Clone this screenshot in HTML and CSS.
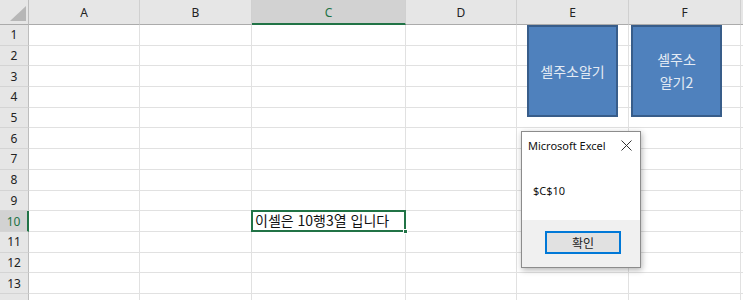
FILE: index.html
```html
<!DOCTYPE html>
<html lang="ko">
<head>
    <meta charset="UTF-8">
    <title>셀주소알기</title>
    <link rel="stylesheet" href="styles.css">
</head>
<body>
<div class="wrap">
    <div class="sheet">
        <div class="corner"><span class="tri"></span></div>
        <div class="colhead">A</div>
        <div class="colhead">B</div>
        <div class="colhead on">C</div>
        <div class="colhead">D</div>
        <div class="colhead">E</div>
        <div class="colhead">F</div>
        <div class="colhead"></div>

        <div class="rowhead">1</div><div class="cell"></div><div class="cell"></div><div class="cell"></div><div class="cell"></div><div class="cell"></div><div class="cell"></div><div class="cell"></div>
        <div class="rowhead">2</div><div class="cell"></div><div class="cell"></div><div class="cell"></div><div class="cell"></div><div class="cell"></div><div class="cell"></div><div class="cell"></div>
        <div class="rowhead">3</div><div class="cell"></div><div class="cell"></div><div class="cell"></div><div class="cell"></div><div class="cell"></div><div class="cell"></div><div class="cell"></div>
        <div class="rowhead">4</div><div class="cell"></div><div class="cell"></div><div class="cell"></div><div class="cell"></div><div class="cell"></div><div class="cell"></div><div class="cell"></div>
        <div class="rowhead">5</div><div class="cell"></div><div class="cell"></div><div class="cell"></div><div class="cell"></div><div class="cell"></div><div class="cell"></div><div class="cell"></div>
        <div class="rowhead">6</div><div class="cell"></div><div class="cell"></div><div class="cell"></div><div class="cell"></div><div class="cell"></div><div class="cell"></div><div class="cell"></div>
        <div class="rowhead">7</div><div class="cell"></div><div class="cell"></div><div class="cell"></div><div class="cell"></div><div class="cell"></div><div class="cell"></div><div class="cell"></div>
        <div class="rowhead">8</div><div class="cell"></div><div class="cell"></div><div class="cell"></div><div class="cell"></div><div class="cell"></div><div class="cell"></div><div class="cell"></div>
        <div class="rowhead">9</div><div class="cell"></div><div class="cell"></div><div class="cell"></div><div class="cell"></div><div class="cell"></div><div class="cell"></div><div class="cell"></div>
        <div class="rowhead on">10</div><div class="cell"></div><div class="cell"></div><div class="cell sel">이셀은 10행3열 입니다<span class="handle"></span></div><div class="cell"></div><div class="cell"></div><div class="cell"></div><div class="cell"></div>
        <div class="rowhead">11</div><div class="cell"></div><div class="cell"></div><div class="cell"></div><div class="cell"></div><div class="cell"></div><div class="cell"></div><div class="cell"></div>
        <div class="rowhead">12</div><div class="cell"></div><div class="cell"></div><div class="cell"></div><div class="cell"></div><div class="cell"></div><div class="cell"></div><div class="cell"></div>
        <div class="rowhead">13</div><div class="cell"></div><div class="cell"></div><div class="cell"></div><div class="cell"></div><div class="cell"></div><div class="cell"></div><div class="cell"></div>
        <div class="rowhead"></div><div class="cell"></div><div class="cell"></div><div class="cell"></div><div class="cell"></div><div class="cell"></div><div class="cell"></div><div class="cell"></div>
    </div>

    <!-- 시트 위에 올려진 도형 버튼 -->
    <div class="shape btn1">셀주소알기</div>
    <div class="shape btn2">셀주소<br>알기2</div>

    <!-- 메시지 박스 -->
    <div class="msgbox">
        <div class="msg-title">
            <span>Microsoft Excel</span>
            <svg class="close" width="11" height="11" viewBox="0 0 11 11">
                <path d="M0.5 0.5L10.5 10.5M10.5 0.5L0.5 10.5" stroke="#333" stroke-width="1" fill="none"/>
            </svg>
        </div>
        <div class="msg-body">$C$10</div>
        <div class="msg-foot">
            <div class="ok">확인</div>
        </div>
    </div>
</div>
</body>
</html>
```

FILE: styles.css
```css
* {
    padding: 0;
    margin: 0;
    box-sizing: border-box;
}

body {
    background: #fff;
    font-family: "Noto Sans", "Open Sans", "Noto Sans CJK KR", sans-serif;
    overflow: hidden;
}

.wrap {
    position: relative;
    width: 743px;
    height: 300px;
}

.sheet {
    display: grid;
    grid-template-columns: 29px 111px 112px 154px 111px 112px 112px 20px;
    grid-template-rows: 25px repeat(14, 20.7px);
}

.corner {
    background: #e6e6e6;
    border-right: 1px solid #bdbdbd;
    border-bottom: 1px solid #ababab;
    display: flex;
    justify-content: flex-end;
    align-items: flex-end;
    padding: 0 2px 3px 0;
}

.tri {
    width: 0;
    height: 0;
    border-left: 16px solid transparent;
    border-bottom: 15px solid #b7b7b7;
}

.colhead {
    background: #e6e6e6;
    border-right: 1px solid #d0d0d0;
    border-bottom: 1px solid #ababab;
    font-size: 12px;
    color: #222;
    display: flex;
    align-items: center;
    justify-content: center;
    padding-top: 1px;
}

.colhead.on {
    background: #d2d2d2;
    color: #217346;
    border-bottom: 2px solid #217346;
    padding-top: 2px;
}

.rowhead {
    background: #e6e6e6;
    border-right: 1px solid #bdbdbd;
    border-bottom: 1px solid #d4d4d4;
    font-size: 12px;
    color: #222;
    display: flex;
    align-items: center;
    justify-content: center;
}

.rowhead.on {
    background: #d2d2d2;
    color: #217346;
    border-right: 2px solid #217346;
}

.cell {
    border-right: 1px solid #e1e1e1;
    border-bottom: 1px solid #e1e1e1;
    font-family: "Noto Sans CJK KR", sans-serif;
    font-size: 14px;
    color: #111;
    white-space: nowrap;
    padding-left: 3px;
    line-height: 19px;
}

.sel {
    position: relative;
}

.sel::after {
    content: "";
    position: absolute;
    left: -1px;
    top: -1px;
    right: -1px;
    bottom: -1px;
    border: 2px solid #217346;
}

.handle {
    position: absolute;
    right: -3px;
    bottom: -3px;
    width: 5px;
    height: 5px;
    background: #217346;
    border: 1px solid #fff;
    z-index: 2;
}

/* 도형 */
.shape {
    position: absolute;
    top: 25px;
    width: 91px;
    height: 92px;
    background: #4f81bd;
    border: 2px solid #385d8a;
    color: #e4ebf4;
    font-family: "Noto Sans CJK KR", sans-serif;
    font-size: 14px;
    line-height: 23px;
    display: flex;
    align-items: center;
    justify-content: center;
    text-align: center;
}

.btn1 {
    left: 527px;
}

.btn2 {
    left: 631px;
}

/* 메시지 박스 */
.msgbox {
    position: absolute;
    left: 521px;
    top: 131px;
    width: 120px;
    height: 137px;
    background: #fff;
    border: 1px solid #8c8c8c;
    box-shadow: 1px 2px 6px rgba(0, 0, 0, 0.3);
    display: flex;
    flex-direction: column;
    font-family: "Noto Sans", "Noto Sans CJK KR", sans-serif;
}

.msg-title {
    height: 27px;
    display: flex;
    align-items: center;
    justify-content: space-between;
    padding: 0 8px 0 6px;
    font-size: 11px;
    color: #111;
}

.msg-body {
    flex: 1;
    font-size: 11px;
    color: #111;
    padding: 24px 0 0 11px;
}

.msg-foot {
    height: 47px;
    background: #f0f0f0;
    display: flex;
    justify-content: center;
    align-items: flex-start;
    padding: 11px 0 0 4px;
}

.ok {
    width: 76px;
    height: 23px;
    background: #e1e1e1;
    border: 1px solid #0078d7;
    box-shadow: inset 0 0 0 1px #0078d7;
    font-family: "Noto Sans CJK KR", sans-serif;
    font-size: 12px;
    color: #222;
    display: flex;
    align-items: center;
    justify-content: center;
}
```
